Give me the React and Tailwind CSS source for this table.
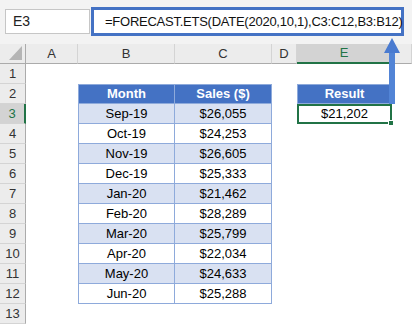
const rows = [
  ["Sep-19", "$26,055"],
  ["Oct-19", "$24,253"],
  ["Nov-19", "$26,605"],
  ["Dec-19", "$25,333"],
  ["Jan-20", "$21,462"],
  ["Feb-20", "$28,289"],
  ["Mar-20", "$25,799"],
  ["Apr-20", "$22,034"],
  ["May-20", "$24,633"],
  ["Jun-20", "$25,288"],
];

const columns = ["A", "B", "C", "D", "E", ""];

function HeaderCell({ label }) {
  const selected = label === "E";
  return (
    <div
      className={
        "flex items-center justify-center border-r border-[#d4d4d4] text-[13px] " +
        (selected
          ? "bg-[#d3d3d3] text-[#217346] border-b-2 border-b-[#217346]"
          : "bg-[#ececec] text-[#333] border-b border-b-[#ababab]")
      }
    >
      {label}
    </div>
  );
}

function RowLabel({ n }) {
  const selected = n === 3;
  return (
    <div
      className={
        "flex items-center justify-center border-b border-[#d4d4d4] text-[13px] " +
        (selected
          ? "bg-[#d3d3d3] text-[#217346] border-r-2 border-r-[#217346]"
          : "bg-[#ececec] text-[#333] border-r border-r-[#ababab]")
      }
    >
      {n}
    </div>
  );
}

function TableCell({ children, head, shaded, first, top }) {
  let cls = "flex items-center justify-center border-r border-b border-[#8eaadb] text-[13px] ";
  if (first) cls += "border-l ";
  if (top) cls += "border-t ";
  if (head) cls += "bg-[#4472c4] text-white font-bold";
  else cls += (shaded ? "bg-[#d9e1f2]" : "bg-white") + " text-black";
  return <div className={cls}>{children}</div>;
}

function SheetRow({ n }) {
  let b = null;
  let c = null;
  let e = <div />;
  if (n === 2) {
    b = <TableCell head first top>Month</TableCell>;
    c = <TableCell head top>Sales ($)</TableCell>;
    e = (
      <div className="flex items-center justify-center border border-[#8eaadb] bg-[#4472c4] text-[13px] font-bold text-white">
        Result
      </div>
    );
  } else if (n >= 3 && n <= 12) {
    const [month, sales] = rows[n - 3];
    const shaded = (n - 3) % 2 === 0;
    b = <TableCell first shaded={shaded}>{month}</TableCell>;
    c = <TableCell shaded={shaded}>{sales}</TableCell>;
    if (n === 3) {
      e = (
        <div className="relative flex items-center justify-center border-2 border-[#217346] bg-white text-[13px] text-black">
          $21,202
          <span className="absolute -bottom-[4px] -right-[4px] h-[6px] w-[6px] border border-white bg-[#217346]" />
        </div>
      );
    }
  }
  return (
    <>
      <RowLabel n={n} />
      <div />
      {b ?? <div />}
      {c ?? <div />}
      <div />
      {e}
      <div />
    </>
  );
}

export default function App() {
  const nums = Array.from({ length: 13 }, (_, i) => i + 1);
  return (
    <div
      className="relative h-[325px] w-[412px] overflow-hidden bg-white"
      style={{ fontFamily: '"Liberation Sans", Arial, sans-serif' }}
    >
      <div className="flex h-[44px] items-start bg-[#f3f3f3] pl-[5px]">
        <div className="mt-[9px] flex h-[25px] w-[85px] items-center border border-[#c6c6c6] bg-white pl-[7px] text-[14px] text-[#222]">
          E3
        </div>
        <div className="ml-[1px] mt-[7px] flex h-[29px] w-[313px] items-center border-[3px] border-[#4472c4] bg-white pl-[11px] text-[13px] tracking-[-0.25px] text-[#111] whitespace-nowrap">
          =FORECAST.ETS(DATE(2020,10,1),C3:C12,B3:B12)
        </div>
      </div>

      <div className="grid grid-cols-[26px_52px_97px_97px_25px_95px_1fr] auto-rows-[20px]">
        <div className="relative border-r border-b border-[#ababab] bg-[#ececec]">
          <svg className="absolute left-[9px] top-[2px]" width="13" height="14" viewBox="0 0 13 14">
            <polygon points="13,0 13,14 0,14" fill="#b5b5b5" />
          </svg>
        </div>
        {columns.map((c, i) => (
          <HeaderCell key={i} label={c} />
        ))}
        {nums.map((n) => (
          <SheetRow key={n} n={n} />
        ))}
      </div>

      <svg className="pointer-events-none absolute left-0 top-0" width="412" height="325">
        <rect x="389" y="52" width="6" height="52" fill="#5284d6" />
        <polygon points="392,38 400,53 384,53" fill="#4a7bd0" />
      </svg>
    </div>
  );
}
